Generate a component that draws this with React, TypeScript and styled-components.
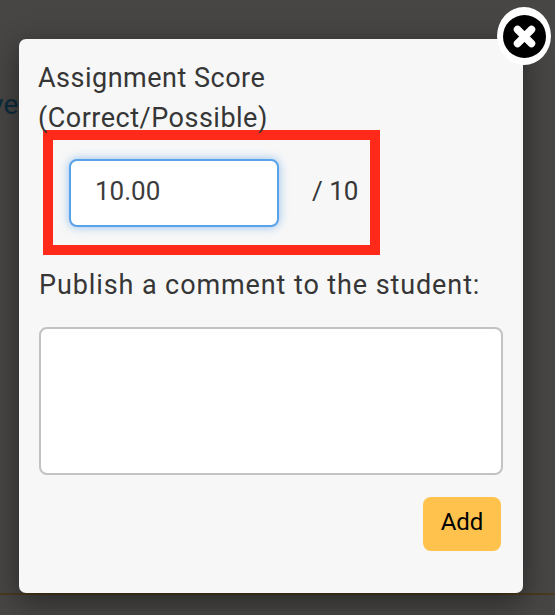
import * as React from "react"
import styled, { createGlobalStyle } from "styled-components"

const GlobalStyle = createGlobalStyle`
  html, body {
    margin: 0;
    padding: 0;
    background: #474645;
  }
`

const Overlay = styled.div`
  position: relative;
  box-sizing: border-box;
  width: 555px;
  height: 615px;
  overflow: hidden;
  padding: 39px 32px 0 19px;
  background: #474645;
  font-family: Roboto, "Noto Sans", sans-serif;
`

const BehindText = styled.span`
  position: absolute;
  left: -10px;
  top: 90px;
  font-size: 28px;
  line-height: 30px;
  color: #0c2c3c;
`

const PageRule = styled.div`
  position: absolute;
  left: 0;
  right: 0;
  top: 593px;
  height: 2px;
  background: #4a3a1e;
`

const Modal = styled.div`
  position: relative;
  box-sizing: border-box;
  width: 504px;
  height: 554px;
  padding: 19px 20px 0 20px;
  background: #f7f7f7;
  border-radius: 7px;
  box-shadow: 0 8px 30px rgba(0, 0, 0, 0.45);
`

const CloseButton = styled.button`
  position: absolute;
  top: -32px;
  right: -28px;
  width: 54px;
  height: 58px;
  padding: 0;
  display: flex;
  align-items: center;
  justify-content: center;
  border: 0;
  border-radius: 50%;
  background: #fff;
`

const ScoreLabel = styled.div`
  height: 72px;
  margin-left: -1px;
  font-size: 27px;
  line-height: 40px;
  letter-spacing: 0.5px;
  color: #363636;
`

const ScoreBox = styled.div`
  box-sizing: border-box;
  display: flex;
  align-items: center;
  width: 337px;
  height: 125px;
  margin-left: 4px;
  padding: 0 0 0 16px;
  border: 10px solid #ff2a1a;
`

const ScoreInput = styled.input`
  box-sizing: border-box;
  width: 210px;
  height: 68px;
  padding: 0 0 4px 24px;
  border: 2px solid #5aa2ea;
  border-radius: 8px;
  background: #fff;
  box-shadow: 0 0 10px rgba(90, 162, 234, 0.65);
  font: 26px Roboto, "Noto Sans", sans-serif;
  color: #3c3c3c;
  outline: none;
`

const Possible = styled.span`
  margin-left: 33px;
  padding-bottom: 4px;
  font-size: 26px;
  color: #363636;
`

const CommentLabel = styled.div`
  margin: 12px 0 24px 0;
  font-size: 27px;
  line-height: 36px;
  letter-spacing: 0.9px;
  color: #363636;
`

const CommentBox = styled.textarea`
  display: block;
  box-sizing: border-box;
  width: 464px;
  height: 148px;
  padding: 8px;
  border: 2px solid #c2c2c2;
  border-radius: 8px;
  background: #fff;
  resize: none;
  outline: none;
`

const Actions = styled.div`
  display: flex;
  justify-content: flex-end;
  width: 462px;
  margin-top: 22px;
`

const AddButton = styled.button`
  width: 78px;
  height: 54px;
  padding: 0 0 4px;
  border: 0;
  border-radius: 8px;
  background: #ffc34d;
  color: #000;
  font: 24px Roboto, "Noto Sans", sans-serif;
`

export default function App() {
  return (
    <>
      <GlobalStyle />
      <Overlay>
        <BehindText>ve</BehindText>
        <PageRule />
        <Modal>
          <CloseButton aria-label="Close">
            <svg width="43" height="43" viewBox="0 0 43 43">
              <circle cx="21.5" cy="21.5" r="21.5" fill="#000" />
              <path d="M14.5 14.5 L28.5 28.5 M28.5 14.5 L14.5 28.5" stroke="#fff" strokeWidth="7.5" strokeLinecap="round" />
            </svg>
          </CloseButton>
          <ScoreLabel>
            Assignment Score
            <br />
            (Correct/Possible)
          </ScoreLabel>
          <ScoreBox>
            <ScoreInput defaultValue="10.00" />
            <Possible>/ 10</Possible>
          </ScoreBox>
          <CommentLabel>Publish a comment to the student:</CommentLabel>
          <CommentBox />
          <Actions>
            <AddButton>Add</AddButton>
          </Actions>
        </Modal>
      </Overlay>
    </>
  )
}
